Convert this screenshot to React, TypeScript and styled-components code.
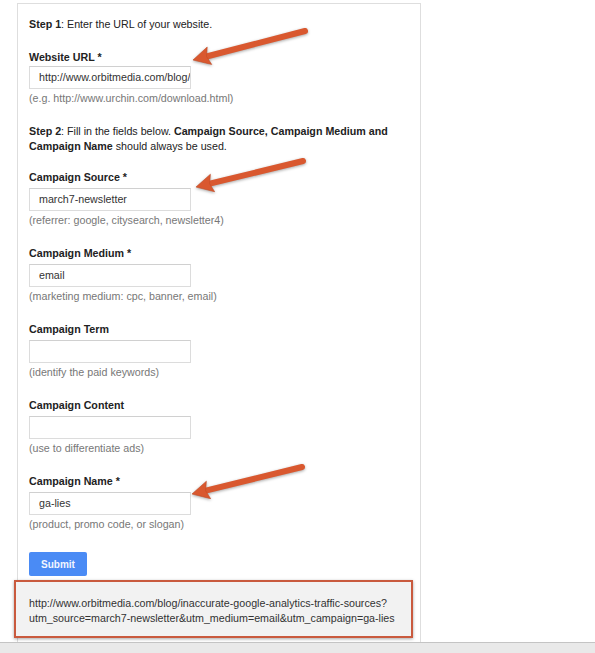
import styled, { createGlobalStyle } from "styled-components";

const GlobalStyle = createGlobalStyle`
  html, body {
    margin: 0;
    padding: 0;
    background: #ffffff;
  }
  body {
    font-family: "Liberation Sans", Arial, Helvetica, sans-serif;
    font-size: 10.7px;
    color: #222;
  }
`;

const Page = styled.div`
  position: relative;
  width: 595px;
  height: 653px;
  overflow: hidden;
  display: flex;
  flex-direction: column;
`;

const Panel = styled.div`
  box-sizing: border-box;
  margin: 3px 0 0 17px;
  width: 404px;
  flex: 1;
  border: 1px solid #dedede;
  border-bottom: none;
  padding: 13px 11px 0;
  display: flex;
  flex-direction: column;
`;

const Text = styled.p<{ $gap?: number }>`
  margin: 0 0 ${(p) => p.$gap ?? 0}px;
  line-height: 15px;
  color: #222;
`;

const Field = styled.div<{ $gap?: number }>`
  display: flex;
  flex-direction: column;
  margin-bottom: ${(p) => p.$gap ?? 18}px;
`;

const Label = styled.div`
  line-height: 15px;
  font-weight: bold;
  color: #222;
`;

const InputBox = styled.div<{ $top?: number }>`
  margin-top: ${(p) => p.$top ?? 3}px;
  width: 162px;
  height: 23px;
  box-sizing: border-box;
  border: 1px solid #dcdcdc;
  border-top-color: #d0d0d0;
  padding: 0 9px;
  line-height: 21px;
  color: #333;
  white-space: nowrap;
  overflow: hidden;
`;

const Help = styled.div`
  margin-top: 2px;
  line-height: 15px;
  color: #777;
`;

const SubmitButton = styled.button`
  width: 58px;
  height: 24px;
  border: none;
  border-radius: 2px;
  background: #4a8bf5;
  color: #f2f6ff;
  font-family: inherit;
  font-size: 10px;
  font-weight: bold;
  padding: 0;
`;

const ResultBox = styled.div`
  margin: 4px -4px 4px -15px;
  height: 58px;
  box-sizing: border-box;
  border: 2px solid #c95a3e;
  background: #f2f2f2;
  box-shadow: 0 1px 3px rgba(0, 0, 0, 0.35);
  padding: 14px 10px 0 13px;
  line-height: 15px;
  color: #333;
`;

const BottomBar = styled.div`
  height: 11px;
  background: #e9e9e9;
  border-top: 1px solid #c4c4c4;
`;

const Overlay = styled.svg`
  position: absolute;
  left: 0;
  top: 0;
  pointer-events: none;
  filter: drop-shadow(0 1px 1.5px rgba(0, 0, 0, 0.35));
`;

type Pt = [number, number];

const arrows: { tail: Pt; tip: Pt }[] = [
  { tail: [305, 31], tip: [193, 60] },
  { tail: [303, 161], tip: [196, 187] },
  { tail: [302, 467], tip: [192, 494] },
];

const Arrow = ({ tail, tip }: { tail: Pt; tip: Pt }) => {
  const dx = tip[0] - tail[0];
  const dy = tip[1] - tail[1];
  const len = Math.hypot(dx, dy);
  const ux = dx / len;
  const uy = dy / len;
  const nx = -uy;
  const ny = ux;
  const headLen = 17;
  const headW = 9;
  const bx = tip[0] - ux * headLen;
  const by = tip[1] - uy * headLen;
  const nbx = tip[0] - ux * (headLen - 3);
  const nby = tip[1] - uy * (headLen - 3);
  const head = [
    `M${tip[0]},${tip[1]}`,
    `L${bx + nx * headW},${by + ny * headW}`,
    `L${nbx},${nby}`,
    `L${bx - nx * headW},${by - ny * headW}`,
    "Z",
  ].join(" ");
  return (
    <g>
      <line
        x1={tail[0]}
        y1={tail[1]}
        x2={nbx + ux * 2}
        y2={nby + uy * 2}
        stroke="#d9582f"
        strokeWidth={6}
        strokeLinecap="round"
      />
      <path d={head} fill="#d9582f" stroke="#c24a24" strokeWidth={0.6} strokeLinejoin="round" />
    </g>
  );
};

const fields = [
  { label: "Campaign Source *", value: "march7-newsletter", help: "(referrer: google, citysearch, newsletter4)" },
  { label: "Campaign Medium *", value: "email", help: "(marketing medium: cpc, banner, email)" },
  { label: "Campaign Term", value: "", help: "(identify the paid keywords)" },
  { label: "Campaign Content", value: "", help: "(use to differentiate ads)" },
  { label: "Campaign Name *", value: "ga-lies", help: "(product, promo code, or slogan)" },
];

const App = () => {
  return (
    <Page>
      <GlobalStyle />
      <Panel>
        <Text $gap={18}>
          <b>Step 1</b>: Enter the URL of your website.
        </Text>
        <Field>
          <Label>Website URL *</Label>
          <InputBox $top={1}>http://www.orbitmedia.com/blog/inaccurate-google-analytics-traffic-sources</InputBox>
          <Help>(e.g. http://www.urchin.com/download.html)</Help>
        </Field>
        <Text $gap={16}>
          <b>Step 2</b>: Fill in the fields below. <b>Campaign Source, Campaign Medium and</b>
          <br />
          <b>Campaign Name</b> should always be used.
        </Text>
        {fields.map((f, i) => (
          <Field key={f.label} $gap={i === fields.length - 1 ? 20 : 18}>
            <Label>{f.label}</Label>
            <InputBox>{f.value}</InputBox>
            <Help>{f.help}</Help>
          </Field>
        ))}
        <div>
          <SubmitButton>Submit</SubmitButton>
        </div>
        <ResultBox>
          http://www.orbitmedia.com/blog/inaccurate-google-analytics-traffic-sources?
          <br />
          utm_source=march7-newsletter&amp;utm_medium=email&amp;utm_campaign=ga-lies
        </ResultBox>
      </Panel>
      <BottomBar />
      <Overlay width={595} height={653}>
        {arrows.map((a, i) => (
          <Arrow key={i} tail={a.tail} tip={a.tip} />
        ))}
      </Overlay>
    </Page>
  );
};

export default App;
